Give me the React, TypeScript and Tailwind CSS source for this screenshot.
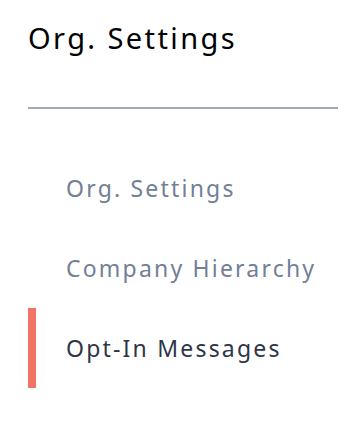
import React from 'react';

const items = [
  { label: 'Org. Settings', active: false },
  { label: 'Company Hierarchy', active: false },
  { label: 'Opt-In Messages', active: true },
];

export default function App() {
  return (
    <div className="w-[360px] h-[444px] bg-white px-[28px] pt-[18px]" style={{ fontFamily: '"Noto Sans", sans-serif' }}>
      <h1 className="text-[29px] leading-[40px] tracking-[2.4px] text-black">Org. Settings</h1>
      <div className="mt-[49px] h-[2px] w-[310px] bg-[#a0a8b1]" />
      <nav className="mt-[39px] flex flex-col">
        {items.map((item) => (
          <div
            key={item.label}
            className={`h-[80px] flex items-center border-l-[8px] pl-[30px] text-[23px] tracking-[2.2px] ${
              item.active ? 'border-[#ee7466] text-[#2d3748]' : 'border-transparent text-[#718096]'
            }`}
          >
            {item.label}
          </div>
        ))}
      </nav>
    </div>
  );
}
